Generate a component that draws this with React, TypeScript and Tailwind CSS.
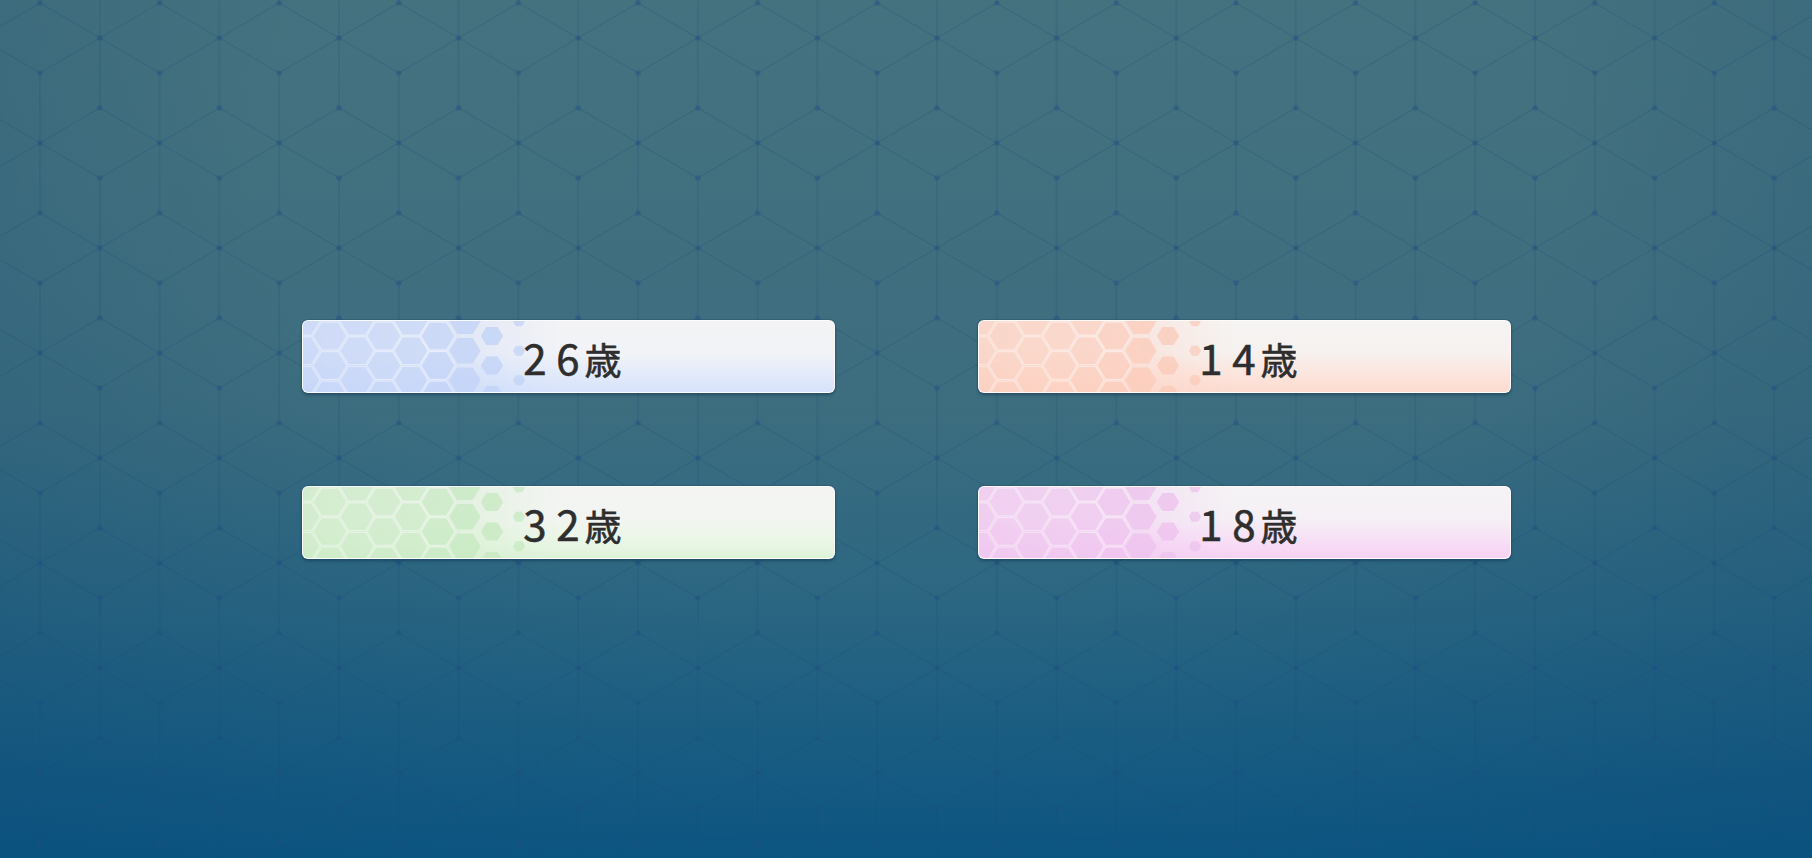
import React from "react";

type Age = {
  digits: string;
  surface: string;
  hex: string;
};

const ages: Age[] = [
  {
    digits: "26",
    surface:
      "bg-[linear-gradient(90deg,rgba(196,212,248,0.75)_0%,rgba(200,215,248,0.45)_28%,rgba(200,215,248,0)_48%),linear-gradient(180deg,#f3f3f5_0%,#f1f3f7_45%,#dfe8fb_82%,#d7e3fb_100%)]",
    hex: "#c0d1f7",
  },
  {
    digits: "14",
    surface:
      "bg-[linear-gradient(90deg,rgba(252,208,192,0.75)_0%,rgba(252,210,196,0.45)_28%,rgba(252,210,196,0)_48%),linear-gradient(180deg,#f6f4f3_0%,#f6f1ef_45%,#fde2d9_82%,#fcdbd0_100%)]",
    hex: "#fbcab8",
  },
  {
    digits: "32",
    surface:
      "bg-[linear-gradient(90deg,rgba(204,235,199,0.75)_0%,rgba(206,236,201,0.45)_28%,rgba(206,236,201,0)_48%),linear-gradient(180deg,#f3f4f2_0%,#f2f5f1_45%,#e8f6e4_82%,#def2d9_100%)]",
    hex: "#c5e8bf",
  },
  {
    digits: "18",
    surface:
      "bg-[linear-gradient(90deg,rgba(240,198,240,0.75)_0%,rgba(241,201,241,0.45)_28%,rgba(241,201,241,0)_48%),linear-gradient(180deg,#f5f3f5_0%,#f5f0f5_45%,#f8dbf6_82%,#f5d2f3_100%)]",
    hex: "#edc0ed",
  },
];

// per column, right to left: size factor and opacity of the hex cells
const columns = [
  { s: 0.36, o: 0.7 },
  { s: 0.66, o: 0.75 },
  { s: 0.92, o: 0.72 },
  { s: 1, o: 0.58 },
  { s: 1, o: 0.44 },
  { s: 1, o: 0.33 },
  { s: 1, o: 0.25 },
  { s: 1, o: 0.18 },
  { s: 1, o: 0.14 },
];

function hexPoints(cx: number, cy: number, s: number) {
  const r = 17 * s;
  const h = 13.8 * s;
  return [
    [cx - r, cy],
    [cx - r / 2, cy - h],
    [cx + r / 2, cy - h],
    [cx + r, cy],
    [cx + r / 2, cy + h],
    [cx - r / 2, cy + h],
  ]
    .map((p) => p.map((n) => n.toFixed(1)).join(","))
    .join(" ");
}

function HexFade({ color }: { color: string }) {
  const cells: React.ReactNode[] = [];
  columns.forEach((col, i) => {
    const cx = 216 - 27 * i;
    const start = i % 2 === 1 ? 15 : 29.75;
    for (let j = -2; j <= 2; j++) {
      const cy = start + 29.5 * j;
      cells.push(
        <polygon
          key={`${i}-${j}`}
          points={hexPoints(cx, cy, col.s)}
          fill={color}
          fillOpacity={col.o}
          stroke="#ffffff"
          strokeOpacity={col.s === 1 ? 0.4 : 0}
          strokeWidth={1.2}
        />,
      );
    }
  });
  return (
    <svg
      className="absolute left-0 top-0 h-[73px] w-[240px]"
      viewBox="0 0 240 73"
    >
      {cells}
    </svg>
  );
}

function AgeButton({ age }: { age: Age }) {
  const chars = age.digits.split("");
  return (
    <button
      type="button"
      className={`relative flex h-[73px] w-[533px] items-center overflow-hidden rounded-[6px] border border-white/85 ${age.surface} shadow-[0_0_0_1px_rgba(40,75,105,0.35),0_2px_3px_rgba(0,25,55,0.35)]`}
    >
      <HexFade color={age.hex} />
      <span className="relative flex items-baseline pl-[216px] pt-[1px] font-['Noto_Sans_CJK_JP',sans-serif] font-normal text-[#2e2e2e] [-webkit-text-stroke:0.6px_#2e2e2e]">
        {chars.map((c, i) => (
          <span
            key={i}
            className="inline-block w-[33px] text-center text-[42px] leading-none"
          >
            {c}
          </span>
        ))}
        <span className="text-[37px] leading-none">歳</span>
      </span>
    </button>
  );
}

// isometric cube pattern: each cube draws its Y and three of its hexagon edges
const SX = 59.8;
function cubeLines() {
  const out: React.ReactNode[] = [];
  for (let n = -2; n <= 3; n++) {
    for (let m = -2; m <= 2; m++) {
      const cx = SX + 2 * SX * m + SX * n;
      const cy = 70 + 105 * n;
      if (cx < -2 * SX - 10 || cx > 4 * SX + 10 || cy < -150 || cy > 360) continue;
      const segs = [
        [cx, cy, cx, cy + 70],
        [cx, cy, cx - SX, cy - 35],
        [cx, cy, cx + SX, cy - 35],
        [cx, cy - 70, cx - SX, cy - 35],
        [cx, cy - 70, cx + SX, cy - 35],
        [cx - SX, cy - 35, cx - SX, cy + 35],
      ];
      segs.forEach((s, k) => {
        out.push(
          <line key={`${n}-${m}-${k}`} x1={s[0]} y1={s[1]} x2={s[2]} y2={s[3]} />,
        );
      });
    }
  }
  return out;
}

function CubeGrid() {
  return (
    <svg className="absolute inset-0 h-full w-full">
      <defs>
        <pattern
          id="cube"
          width={2 * SX}
          height="210"
          patternUnits="userSpaceOnUse"
          x="40"
          y="108"
        >
          <g stroke="rgba(22,70,112,0.22)" strokeWidth="1.4" fill="none">
            {cubeLines()}
          </g>
        </pattern>
        <pattern
          id="dots"
          width={2 * SX}
          height="70"
          patternUnits="userSpaceOnUse"
          x="10.1"
          y="-14.5"
        >
          <g fill="rgba(28,78,130,0.4)">
            <circle cx="29.9" cy="17.5" r="2.8" />
            <circle cx="89.7" cy="52.5" r="2.8" />
          </g>
        </pattern>
      </defs>
      <rect width="100%" height="100%" fill="url(#cube)" />
      <rect width="100%" height="100%" fill="url(#dots)" />
    </svg>
  );
}

export default function App() {
  return (
    <div className="relative h-screen w-full overflow-hidden bg-[radial-gradient(ellipse_75%_100%_at_50%_20%,rgba(0,60,110,0)_48%,rgba(0,60,110,0.3)_100%),linear-gradient(180deg,#45727f_0%,#3c6d7f_48%,#2a6682_72%,#0f5b86_100%)]">
      <CubeGrid />
      <div className="relative flex justify-center pt-[320px]">
        <div className="grid grid-cols-2 gap-x-[143px] gap-y-[93px]">
          {ages.map((a) => (
            <AgeButton key={a.digits} age={a} />
          ))}
        </div>
      </div>
    </div>
  );
}
